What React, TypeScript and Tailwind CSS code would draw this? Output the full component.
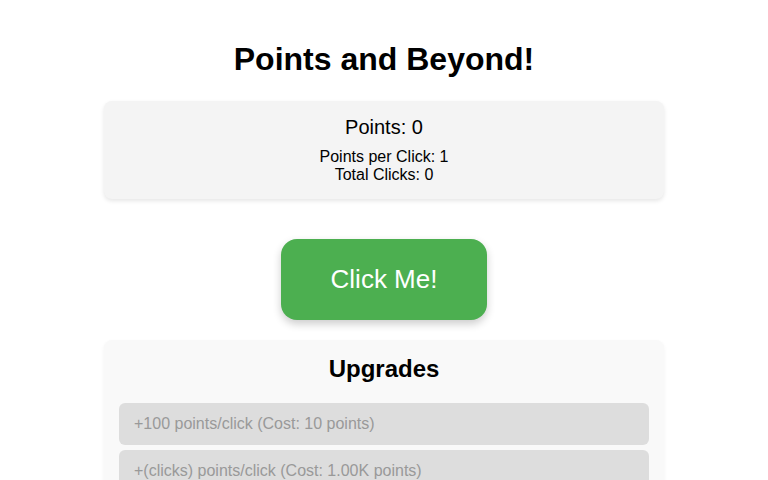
export default function App() {
  return (
    <div className="min-h-screen bg-white pt-5 text-black" style={{ fontFamily: '"Liberation Sans", Arial, sans-serif' }}>
      <div className="mx-auto w-[560px]">
        <h1 className="mt-[21.44px] mb-[22.44px] text-center text-[32px] font-bold leading-[37px]">Points and Beyond!</h1>
        <div className="rounded-lg bg-[#f4f4f4] p-[15px] text-center shadow-[0_2px_4px_rgba(0,0,0,0.1)]">
          <div className="text-[20px] leading-[23px]">Points: 0</div>
          <div className="mt-[9px] text-[16px] leading-[18px]">Points per Click: 1</div>
          <div className="text-[16px] leading-[18px]">Total Clicks: 0</div>
        </div>
        <div className="mt-10 flex justify-center">
          <button className="h-[81px] w-[206px] rounded-2xl bg-[#4caf50] text-[26px] text-white shadow-[0_4px_8px_rgba(0,0,0,0.2)]">Click Me!</button>
        </div>
        <div className="mt-5 rounded-lg bg-[#f9f9f9] p-[15px] shadow-[0_2px_4px_rgba(0,0,0,0.05)]">
          <h2 className="text-center text-[24px] font-bold leading-[28px]">Upgrades</h2>
          <div className="mt-5 flex flex-col gap-[5px]">
            <button className="h-[42px] rounded-md bg-[#dddddd] pl-[15px] text-left text-[16px] text-[#999999]">+100 points/click (Cost: 10 points)</button>
            <button className="h-[42px] rounded-md bg-[#dddddd] pl-[15px] text-left text-[16px] text-[#999999]">+(clicks) points/click (Cost: 1.00K points)</button>
            <button className="h-[42px] rounded-md bg-[#dddddd] pl-[15px] text-left text-[16px] text-[#999999]">+10% points/click (Cost: 100K points)</button>
          </div>
        </div>
      </div>
    </div>
  );
}
